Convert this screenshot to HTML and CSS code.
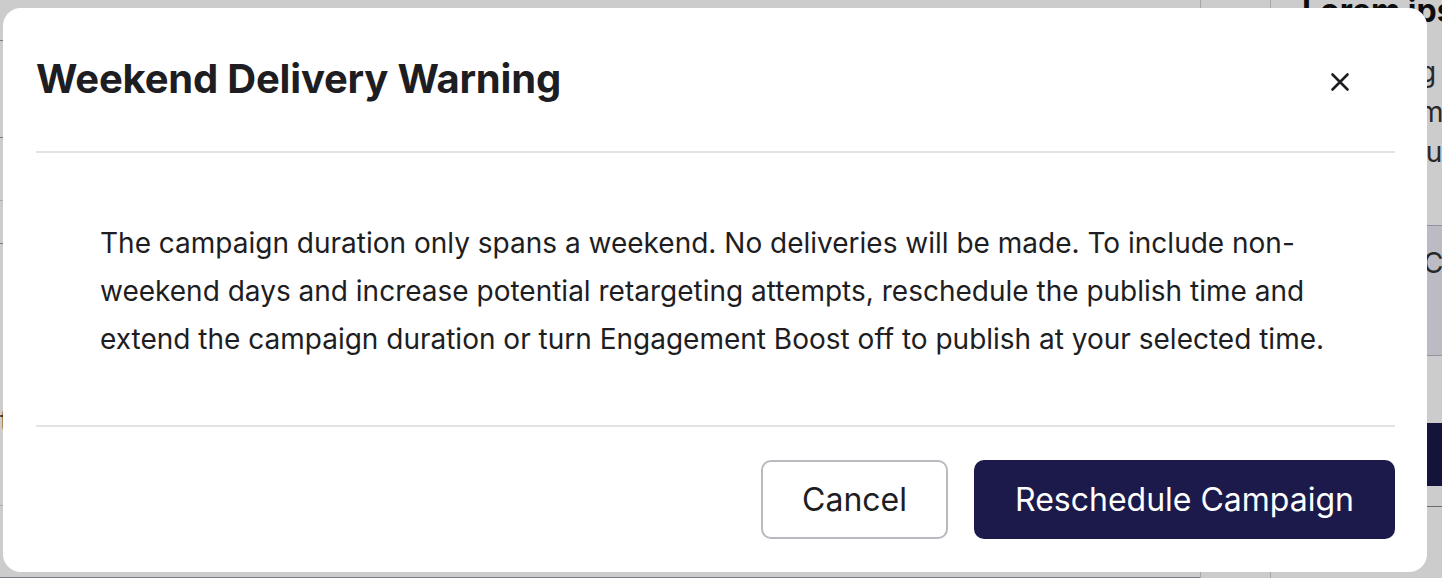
FILE: index.html
```html
<!DOCTYPE html>
<html lang="en">
<head>
<meta charset="utf-8">
<title>Weekend Delivery Warning</title>
<link rel="stylesheet" href="styles.css">
</head>
<body>
<div class="page">
  <div class="main">
    <div class="row row-a"></div>
    <div class="row row-b"></div>
    <div class="row row-c"></div>
    <div class="row row-d"></div>
    <div class="row row-e"><span class="row-text">t</span></div>
    <div class="row row-f"></div>
  </div>
  <div class="col col-1"></div>
  <div class="col col-2"></div>
  <aside class="side">
    <h2 class="side-title">Lorem ipsum</h2>
    <p class="side-text">g<br>m<br>lu</p>
    <div class="side-band">C</div>
    <div class="side-btn"></div>
    <div class="side-line"></div>
  </aside>
</div>

<div class="overlay">
  <div class="modal" role="dialog" aria-labelledby="modal-title">
    <header class="modal-header">
      <h1 class="modal-title" id="modal-title">Weekend Delivery Warning</h1>
      <button class="close-btn" aria-label="Close">
        <svg width="20" height="20" viewBox="0 0 20 20" aria-hidden="true">
          <path d="M2.5 2.5 L17.5 17.5 M17.5 2.5 L2.5 17.5" stroke="#1d1d22" stroke-width="2.6" stroke-linecap="round"/>
        </svg>
      </button>
    </header>
    <div class="modal-body">
      <p class="modal-text">The campaign duration only spans a weekend. No deliveries will be made. To include non-weekend days and increase potential retargeting attempts, reschedule the publish time and extend the campaign duration or turn Engagement Boost off to publish at your selected time.</p>
    </div>
    <footer class="modal-footer">
      <button class="btn btn-secondary">Cancel</button>
      <button class="btn btn-primary">Reschedule Campaign</button>
    </footer>
  </div>
</div>
</body>
</html>
```

FILE: styles.css
```css
* { box-sizing: border-box; }

html, body {
  margin: 0;
  padding: 0;
  height: 100%;
}

body {
  font-family: "Inter", "Noto Sans", sans-serif;
  color: #1d1d22;
  background: #ffffff;
  overflow: hidden;
}

/* background page */
.page {
  display: flex;
  height: 578px;
  width: 1442px;
  overflow: hidden;
}

.main {
  flex: 0 0 1200px;
  display: flex;
  flex-direction: column;
}

.row { border-bottom: 1px solid #9a9aa6; }
.row-a { height: 41px; }
.row-b { height: 97px; }
.row-c { height: 63px; border-bottom-color: #d8d8e0; }
.row-d { height: 43px; }
.row-e { height: 262px; border-bottom-color: #d8d8e0; padding-top: 160px; font-size: 28px; }
.row-f { flex: 1; }
.row-text { color: #444; }

.col {
  flex: 0 0 70px;
  border-left: 1px solid #d0d0d8;
}
.col-2 { flex: 0 0 32px; }

.side {
  flex: 1;
  min-width: 0;
  overflow: hidden;
}

.side-title {
  margin: -9px 0 0 0;
  font-size: 32px;
  line-height: 39px;
  font-weight: 700;
  color: #111;
  white-space: nowrap;
}

.side-text {
  margin: 22px 0 0 0;
  padding-left: 117px;
  font-size: 28px;
  line-height: 40px;
  color: #333;
  white-space: nowrap;
}

.side-band {
  margin-top: 53px;
  height: 131px;
  background: #ebe9f4;
  border-top: 1px solid #b8b8c8;
  border-bottom: 1px solid #b8b8c8;
  font-size: 28px;
  padding: 20px 0 0 121px;
  color: #333;
  white-space: nowrap;
}

.side-btn {
  margin-top: 67px;
  height: 63px;
  background: #1a1a49;
}

.side-line {
  margin-top: 20px;
  border-top: 1px solid #888;
}

/* overlay & modal */
.overlay {
  position: fixed;
  inset: 0;
  background: rgba(0, 0, 0, 0.2);
  display: flex;
  align-items: flex-start;
  justify-content: flex-start;
  padding: 8px 0 0 3px;
}

.modal {
  width: 1424px;
  height: 564px;
  background: #ffffff;
  border-radius: 18px;
  padding: 0 32px 0 33px;
  display: flex;
  flex-direction: column;
}

.modal-header {
  display: flex;
  align-items: center;
  justify-content: space-between;
  height: 145px;
  border-bottom: 2px solid #e3e3e6;
  padding-bottom: 2px;
}

.modal-title {
  margin: 0;
  font-size: 40px;
  font-weight: 700;
  line-height: 48px;
  color: #1d1d22;
  letter-spacing: -0.2px;
}

.close-btn {
  background: none;
  border: 0;
  padding: 0;
  width: 40px;
  height: 40px;
  display: flex;
  align-items: center;
  justify-content: center;
  margin: 6px 35px 0 0;
  cursor: pointer;
}

.modal-body {
  padding: 66px 64px 0 64px;
  height: 274px;
  border-bottom: 2px solid #e3e3e6;
}

.modal-text {
  margin: 0;
  font-size: 28px;
  line-height: 48px;
  color: #1d1d22;
}

.modal-footer {
  display: flex;
  justify-content: flex-end;
  gap: 26px;
  padding-top: 33px;
}

.btn {
  height: 79px;
  font-family: inherit;
  font-size: 32px;
  border-radius: 10px;
  cursor: pointer;
}

.btn-secondary {
  width: 187px;
  background: #ffffff;
  border: 2px solid #b9b9bf;
  color: #1d1d22;
}

.btn-primary {
  width: 421px;
  background: #1b1a4a;
  border: 0;
  color: #ffffff;
}
```
